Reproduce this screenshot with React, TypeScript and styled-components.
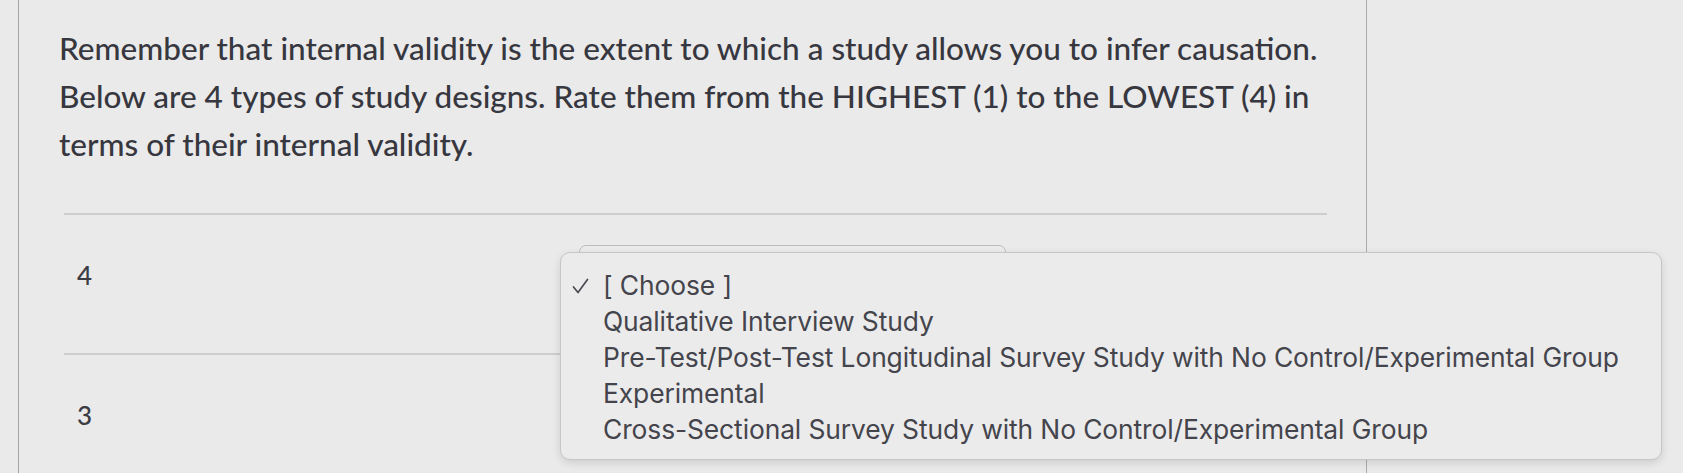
import React from "react";
import styled, { createGlobalStyle } from "styled-components";

const GlobalStyle = createGlobalStyle`
  html, body {
    margin: 0;
    padding: 0;
    background: #eaeaea;
  }
  body {
    font-family: "Lato", "Noto Sans", sans-serif;
    color: #3c3c44;
  }
  * { box-sizing: border-box; }
`;

const Page = styled.div`
  display: flex;
  height: 473px;
  overflow: hidden;
  background: #eaeaea;
`;

const Panel = styled.section`
  margin-left: 18px;
  width: 1349px;
  flex: none;
  border-left: 1px solid #a2a2a2;
  border-right: 1px solid #ababab;
  padding: 24px 39px 0 40px;
`;

const Question = styled.p`
  margin: 0;
  font-family: "Lato", "Noto Sans", sans-serif;
  font-size: 31.5px;
  font-weight: 500;
  line-height: 48px;
  color: #37373f;
  white-space: nowrap;
`;

const Answers = styled.div`
  margin-top: 45px;
  margin-left: 5px;
  border-top: 2px solid #cdcdcd;
`;

const Row = styled.div`
  display: grid;
  grid-template-columns: 515px 427px;
  align-items: start;
  height: 140px;
  padding-top: 30px;
  border-bottom: ${(p: { last?: boolean }) => (p.last ? "none" : "2px solid #cdcdcd")};
`;

const Label = styled.div`
  padding-left: 13px;
  margin-top: 15px;
  font-family: "Lato", "Noto Sans", sans-serif;
  font-size: 26px;
  font-weight: 500;
  line-height: 30px;
  color: #3c3c44;
`;

const SelectWrap = styled.div`
  position: relative;
`;

const SelectBox = styled.div`
  height: 46px;
  border: 1.5px solid #bcbcbc;
  border-radius: 7px;
  background: #ebebeb;
`;

const Menu = styled.ul`
  position: absolute;
  left: -19px;
  top: 7px;
  width: 1102px;
  margin: 0;
  padding: 14px 0 12px 0;
  list-style: none;
  background: #ebebeb;
  border: 1.5px solid #c6c6c6;
  border-radius: 10px;
  box-shadow: 0 3px 8px rgba(0, 0, 0, 0.12);
  z-index: 10;
`;

const Option = styled.li`
  display: flex;
  align-items: center;
  height: 36px;
  padding-left: 42px;
  position: relative;
  font-family: "Inter", "Liberation Sans", sans-serif;
  font-size: 26.4px;
  letter-spacing: -0.1px;
  color: #44444c;
  white-space: nowrap;
`;

const Check = styled.svg`
  position: absolute;
  left: 11px;
  top: 11px;
  width: 17px;
  height: 16px;
`;

const options = [
  "[ Choose ]",
  "Qualitative Interview Study",
  "Pre-Test/Post-Test Longitudinal Survey Study with No Control/Experimental Group",
  "Experimental",
  "Cross-Sectional Survey Study with No Control/Experimental Group",
];

export default function App() {
  return (
    <>
      <GlobalStyle />
      <Page>
        <Panel>
          <Question>
            Remember that internal validity is the extent to which a study allows you to infer causation.
            <br />
            Below are 4 types of study designs. Rate them from the HIGHEST (1) to the LOWEST (4) in
            <br />
            terms of their internal validity.
          </Question>
          <Answers>
            <Row>
              <Label>4</Label>
              <SelectWrap>
                <SelectBox />
                <Menu role="listbox">
                  {options.map((o, i) => (
                    <Option key={o} role="option" aria-selected={i === 0}>
                      {i === 0 && (
                        <Check viewBox="0 0 17 16" fill="none">
                          <path d="M1.5 9 L6 14.5 L15.5 1.5" stroke="#4a4a52" strokeWidth="1.7" strokeLinecap="round" strokeLinejoin="round" />
                        </Check>
                      )}
                      {o}
                    </Option>
                  ))}
                </Menu>
              </SelectWrap>
            </Row>
            <Row last>
              <Label>3</Label>
              <SelectWrap>
                <SelectBox />
              </SelectWrap>
            </Row>
          </Answers>
        </Panel>
      </Page>
    </>
  );
}
